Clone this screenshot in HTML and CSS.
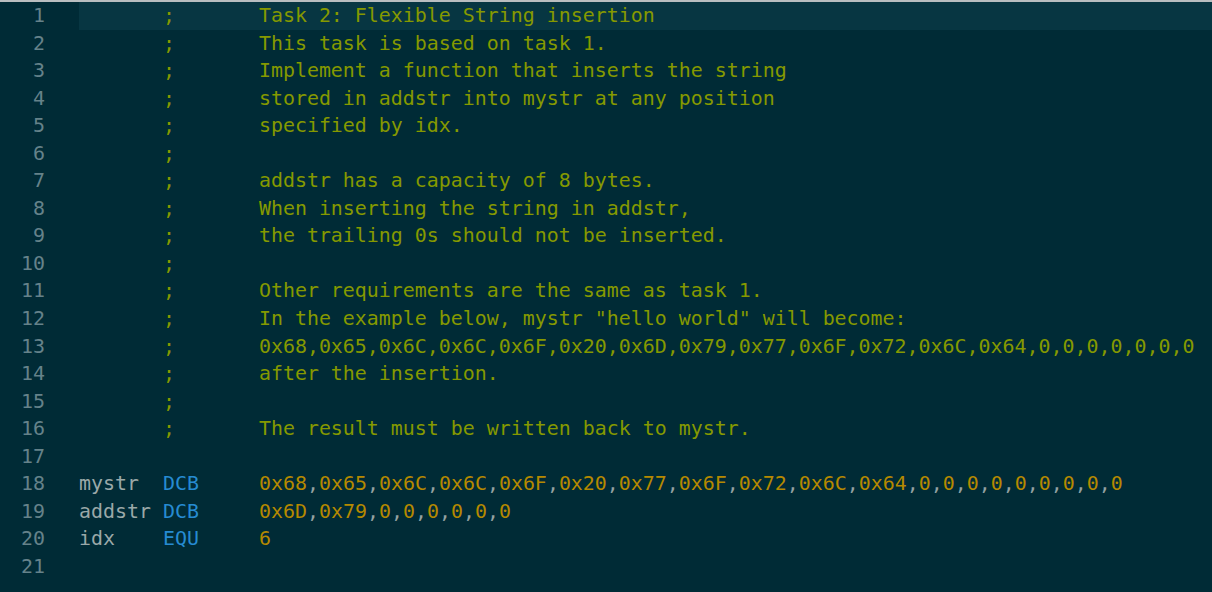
FILE: index.html
```html
<!DOCTYPE html>
<html>
<head>
<meta charset="utf-8">
<link rel="stylesheet" href="styles.css">
</head>
<body>
<div class="editor">
<div class="line current"><span class="ln">1</span><span class="code"><span class="c">       ;       Task 2: Flexible String insertion</span></span></div>
<div class="line"><span class="ln">2</span><span class="code"><span class="c">       ;       This task is based on task 1.</span></span></div>
<div class="line"><span class="ln">3</span><span class="code"><span class="c">       ;       Implement a function that inserts the string</span></span></div>
<div class="line"><span class="ln">4</span><span class="code"><span class="c">       ;       stored in addstr into mystr at any position</span></span></div>
<div class="line"><span class="ln">5</span><span class="code"><span class="c">       ;       specified by idx.</span></span></div>
<div class="line"><span class="ln">6</span><span class="code"><span class="c">       ;</span></span></div>
<div class="line"><span class="ln">7</span><span class="code"><span class="c">       ;       addstr has a capacity of 8 bytes.</span></span></div>
<div class="line"><span class="ln">8</span><span class="code"><span class="c">       ;       When inserting the string in addstr,</span></span></div>
<div class="line"><span class="ln">9</span><span class="code"><span class="c">       ;       the trailing 0s should not be inserted.</span></span></div>
<div class="line"><span class="ln">10</span><span class="code"><span class="c">       ;</span></span></div>
<div class="line"><span class="ln">11</span><span class="code"><span class="c">       ;       Other requirements are the same as task 1.</span></span></div>
<div class="line"><span class="ln">12</span><span class="code"><span class="c">       ;       In the example below, mystr "hello world" will become:</span></span></div>
<div class="line"><span class="ln">13</span><span class="code"><span class="c">       ;       0x68,0x65,0x6C,0x6C,0x6F,0x20,0x6D,0x79,0x77,0x6F,0x72,0x6C,0x64,0,0,0,0,0,0,0</span></span></div>
<div class="line"><span class="ln">14</span><span class="code"><span class="c">       ;       after the insertion.</span></span></div>
<div class="line"><span class="ln">15</span><span class="code"><span class="c">       ;</span></span></div>
<div class="line"><span class="ln">16</span><span class="code"><span class="c">       ;       The result must be written back to mystr.</span></span></div>
<div class="line"><span class="ln">17</span><span class="code"></span></div>
<div class="line"><span class="ln">18</span><span class="code"><span class="l">mystr</span>  <span class="k">DCB</span>     <span class="n">0x68</span><span class="p">,</span><span class="n">0x65</span><span class="p">,</span><span class="n">0x6C</span><span class="p">,</span><span class="n">0x6C</span><span class="p">,</span><span class="n">0x6F</span><span class="p">,</span><span class="n">0x20</span><span class="p">,</span><span class="n">0x77</span><span class="p">,</span><span class="n">0x6F</span><span class="p">,</span><span class="n">0x72</span><span class="p">,</span><span class="n">0x6C</span><span class="p">,</span><span class="n">0x64</span><span class="p">,</span><span class="n">0</span><span class="p">,</span><span class="n">0</span><span class="p">,</span><span class="n">0</span><span class="p">,</span><span class="n">0</span><span class="p">,</span><span class="n">0</span><span class="p">,</span><span class="n">0</span><span class="p">,</span><span class="n">0</span><span class="p">,</span><span class="n">0</span><span class="p">,</span><span class="n">0</span></span></div>
<div class="line"><span class="ln">19</span><span class="code"><span class="l">addstr</span> <span class="k">DCB</span>     <span class="n">0x6D</span><span class="p">,</span><span class="n">0x79</span><span class="p">,</span><span class="n">0</span><span class="p">,</span><span class="n">0</span><span class="p">,</span><span class="n">0</span><span class="p">,</span><span class="n">0</span><span class="p">,</span><span class="n">0</span><span class="p">,</span><span class="n">0</span></span></div>
<div class="line"><span class="ln">20</span><span class="code"><span class="l">idx</span>    <span class="k">EQU</span>     <span class="n">6</span></span></div>
<div class="line"><span class="ln">21</span><span class="code"></span></div>
</div>
</body>
</html>
```

FILE: styles.css
```css
html, body {
  margin: 0;
  padding: 0;
  background: #002b36;
  height: 100%;
  overflow: hidden;
}

.editor {
  border-top: 2px solid #b9bec0;
  font-family: "DejaVu Sans Mono", monospace;
  font-size: 19.93px;
  line-height: 27.55px;
  background: #002b36;
  height: 100%;
}

.line {
  display: flex;
  height: 27.55px;
}

.ln {
  flex: 0 0 79px;
  box-sizing: border-box;
  padding-right: 34px;
  text-align: right;
  color: #65828a;
}

.code {
  flex: 1;
  white-space: pre;
  color: #93a1a1;
}

.current .code {
  background: #073642;
}

.c { color: #859900; }
.l { color: #9aa8a8; }
.k { color: #268bd2; }
.n { color: #b58900; }
.p { color: #93a1a1; }
```
